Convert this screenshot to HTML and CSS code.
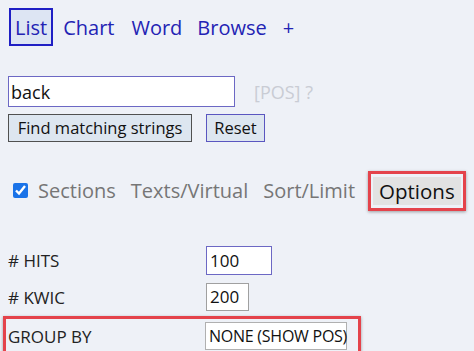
FILE: index.html
```html
<!DOCTYPE html>
<html>
<head>
<meta charset="utf-8">
<link rel="stylesheet" href="styles.css">
</head>
<body>
<nav class="tabs">
  <span class="tab active">List</span>
  <span class="tab">Chart</span>
  <span class="tab">Word</span>
  <span class="tab">Browse</span>
  <span class="tab">+</span>
</nav>
<div class="query">
  <div class="query-row">
    <input class="query-input" type="text" value="back">
    <span class="pos-hint">[POS] ?</span>
  </div>
  <div class="button-row">
    <button class="btn btn-find">Find matching strings</button>
    <button class="btn btn-reset">Reset</button>
  </div>
</div>
<div class="sections">
  <label class="check"><input type="checkbox" checked><span class="sec">Sections</span></label>
  <span class="sec">Texts/Virtual</span>
  <span class="sec">Sort/Limit</span>
  <span class="highlight options-hl"><span class="options-btn">Options</span></span>
</div>
<div class="opts">
  <div class="opt-row hits">
    <span class="opt-label"># HITS</span>
    <span class="field field-focus w-hits">100</span>
  </div>
  <div class="opt-row kwic">
    <span class="opt-label"># KWIC</span>
    <span class="field w-kwic">200</span>
  </div>
  <div class="opt-row group highlight">
    <span class="opt-label">GROUP BY</span>
    <span class="field select">NONE (SHOW POS)</span>
  </div>
</div>
</body>
</html>
```
FILE: styles.css
```css
html, body {
  margin: 0;
  padding: 0;
  background: #eef1f7;
  font-family: "Open Sans", "Noto Sans", sans-serif;
  overflow: hidden;
  height: 351px;
}
.tabs {
  display: flex;
  align-items: center;
  padding: 8px 0 0 9px;
  height: 38px;
}
.tab {
  color: #2323b4;
  font-size: 20px;
  margin-right: 15px;
  line-height: 27px;
}
.tab:nth-child(2) { margin-right: 17px; }
.tab:nth-child(3) { margin-right: 15px; }
.tab:nth-child(4) { margin-right: 16px; }
.tab.active {
  border: 2px solid #1f1fc4;
  background: #dde5f3;
  padding: 4px 4px 3px 4px;
  margin-right: 10px;
}
.query {
  padding: 30px 0 0 8px;
}
.query-row {
  display: flex;
  align-items: center;
}
.query-input {
  box-sizing: border-box;
  width: 227px;
  height: 31px;
  border: 1px solid #6c68c4;
  background: #fff;
  font-family: inherit;
  font-size: 18px;
  color: #111;
  padding: 0 2px;
  margin: 0;
  outline: none;
}
.pos-hint {
  margin-left: 19px;
  color: #c9ccd4;
  font-size: 18px;
}
.button-row {
  display: flex;
  margin-top: 7px;
}
.btn {
  box-sizing: border-box;
  height: 28px;
  font-family: inherit;
  font-size: 16.5px;
  color: #111;
  background: #dde6f0;
  padding: 0;
  margin: 0;
  line-height: 1;
  white-space: nowrap;
}
.btn-find {
  width: 184px;
  border: 1px solid #505050;
}
.btn-reset {
  margin-left: 14px;
  width: 59px;
  border: 1px solid #5a56c0;
}
.sections {
  display: flex;
  align-items: center;
  padding: 30px 0 0 13px;
  height: 37px;
}
.check {
  display: flex;
  align-items: center;
}
.check input {
  margin: 0 10px 0 0;
  width: 15px;
  height: 15px;
  accent-color: #1a73e8;
}
.sec {
  color: #767676;
  font-size: 20px;
  margin-right: 15px;
}
.highlight {
  border: 3px solid #e4434b;
  box-shadow: 0 1px 3px rgba(0,0,0,0.35);
}
.options-hl {
  margin-left: -2px;
  padding: 3px 2px;
  display: inline-flex;
}
.options-btn {
  background: #e2e2e2;
  color: #111;
  font-size: 20.5px;
  padding: 0 6px;
  line-height: 28px;
}
.opts {
  padding-top: 37px;
}
.opt-row {
  display: flex;
  align-items: center;
}
.opt-label {
  width: 198px;
  padding-left: 8px;
  font-size: 17px;
  color: #222;
}
.field {
  box-sizing: border-box;
  background: #fff;
  border: 1px solid #a0a0a0;
  font-size: 17px;
  color: #111;
  padding: 0 3px;
  line-height: 26px;
  white-space: nowrap;
}
.field-focus {
  border: 1px solid #6c68c4;
}
.w-hits { width: 66px; height: 29px; line-height: 27px; }
.w-kwic { width: 43px; height: 28px; }
.kwic { margin-top: 8px; }
.group {
  margin: 5px 0 0 3px;
  width: 352px;
  height: 34px;
  box-sizing: content-box;
}
.group .opt-label { width: 197px; padding-left: 2px; }
.select {
  width: 142px;
  height: 28px;
  padding: 0 3px;
  border-color: #b0b0b0;
  font-size: 16px;
  letter-spacing: -0.25px;
}
```
